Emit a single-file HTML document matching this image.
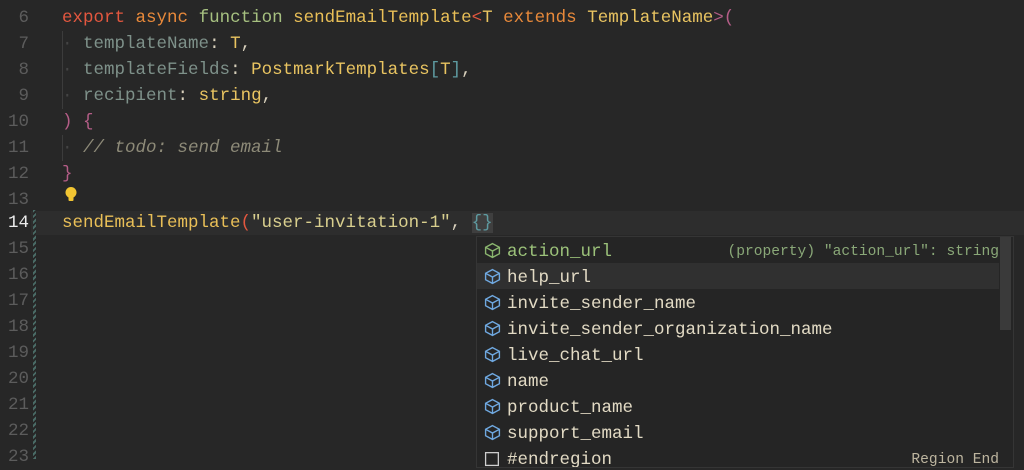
<!DOCTYPE html>
<html><head><meta charset="utf-8"><style>
body{margin:0;width:1024px;height:459px;background:#272727;overflow:hidden;font-family:"Liberation Mono",monospace;font-size:17.5px;position:relative}
.ln{position:absolute;left:0;width:29px;text-align:right;color:#5c5c5c;height:26px;line-height:26px}
.cl{position:absolute;left:62px;height:26px;line-height:26px;white-space:pre;color:#d8d0bc}
.g{position:absolute;left:62px;width:1px;background:#3c3c3c}
.k1{color:#e3573f}.k2{color:#e8893a}.k3{color:#a6c080}.fn{color:#e9bf57}.p{color:#7e918a}.ty{color:#e9c461}.br{color:#b45d87}.cm{color:#8d8a78;font-style:italic}.st{color:#d9cf8e}.bk{color:#5e9aa0}.dot{color:#444}
#pop{position:absolute;left:476px;top:236px;width:536px;height:230px;background:#252525;border:1px solid #353535;overflow:hidden}
.r{position:absolute;left:0;width:522px;height:26px;line-height:26px;white-space:pre;color:#e2dac4;padding-top:2px;box-sizing:border-box}
.r svg{position:absolute;left:7px;top:5px}
.r span.t{position:absolute;left:30px}
.d{position:absolute;right:0;font-size:14.6px}
</style></head><body>
<div style="position:absolute;left:31px;top:211px;width:993px;height:24px;background:#2d2d2d"></div>
<div style="position:absolute;left:33px;top:210px;width:3px;height:249px;background:repeating-linear-gradient(135deg,#4a6b66 0 2px,#272727 2px 4px)"></div>
<div class="g" style="top:31px;height:78px"></div>
<div class="g" style="top:135px;height:26px"></div>
<div class="ln" style="top:5px">6</div>
<div class="ln" style="top:31px">7</div>
<div class="ln" style="top:57px">8</div>
<div class="ln" style="top:83px">9</div>
<div class="ln" style="top:109px">10</div>
<div class="ln" style="top:135px">11</div>
<div class="ln" style="top:161px">12</div>
<div class="ln" style="top:187px">13</div>
<div class="ln" style="top:210px;color:#ececec">14</div>
<div class="ln" style="top:236px">15</div>
<div class="ln" style="top:262px">16</div>
<div class="ln" style="top:288px">17</div>
<div class="ln" style="top:314px">18</div>
<div class="ln" style="top:340px">19</div>
<div class="ln" style="top:366px">20</div>
<div class="ln" style="top:392px">21</div>
<div class="ln" style="top:418px">22</div>
<div class="ln" style="top:444px">23</div>
<div class="cl" style="top:5px"><span class="k1">export</span> <span class="k2">async</span> <span class="k3">function</span> <span class="fn">sendEmailTemplate</span><span class="k1">&lt;</span><span class="ty">T</span> <span class="k2">extends</span> <span class="ty">TemplateName</span><span class="br">&gt;(</span></div>
<div class="cl" style="top:31px"><span class="dot">·</span> <span class="p">templateName</span>: <span class="ty">T</span>,</div>
<div class="cl" style="top:57px"><span class="dot">·</span> <span class="p">templateFields</span>: <span class="ty">PostmarkTemplates</span><span class="bk">[</span><span class="ty">T</span><span class="bk">]</span>,</div>
<div class="cl" style="top:83px"><span class="dot">·</span> <span class="p">recipient</span>: <span class="ty">string</span>,</div>
<div class="cl" style="top:109px"><span class="br">)</span> <span class="br">{</span></div>
<div class="cl" style="top:135px"><span class="dot">·</span> <span class="cm">// todo: send email</span></div>
<div class="cl" style="top:161px"><span class="br">}</span></div>
<svg style="position:absolute;left:64px;top:186px" width="14" height="18" viewBox="0 0 14 18"><circle cx="7" cy="6.5" r="5.5" fill="#f2c532"/><rect x="4.5" y="10" width="5" height="5" rx="1" fill="#f2c532"/></svg>
<div class="cl" style="top:210px"><span class="fn">sendEmailTemplate</span><span class="k1">(</span><span class="st">"user-invitation-1"</span>, <span style="background:#3f3f3f" class="bk">{}</span></div>
<div id="pop">
<div class="r" style="top:0"><svg width="17" height="17" viewBox="0 0 16 16" fill="none" stroke="#8ab56e" stroke-width="1.3"><path d="M8 1.5 14.5 5v6L8 14.5 1.5 11V5z M1.5 5 8 8.5 14.5 5 M8 8.5v6"/></svg><span class="t" style="color:#9cc27a">action_url</span><span class="d" style="color:#8aa878">(property) "action_url": string</span></div>
<div class="r" style="top:26px;background:#303030"><svg width="17" height="17" viewBox="0 0 16 16" fill="none" stroke="#6fa8e0" stroke-width="1.3"><path d="M8 1.5 14.5 5v6L8 14.5 1.5 11V5z M1.5 5 8 8.5 14.5 5 M8 8.5v6"/></svg><span class="t">help_url</span></div>
<div class="r" style="top:52px"><svg width="17" height="17" viewBox="0 0 16 16" fill="none" stroke="#6fa8e0" stroke-width="1.3"><path d="M8 1.5 14.5 5v6L8 14.5 1.5 11V5z M1.5 5 8 8.5 14.5 5 M8 8.5v6"/></svg><span class="t">invite_sender_name</span></div>
<div class="r" style="top:78px"><svg width="17" height="17" viewBox="0 0 16 16" fill="none" stroke="#6fa8e0" stroke-width="1.3"><path d="M8 1.5 14.5 5v6L8 14.5 1.5 11V5z M1.5 5 8 8.5 14.5 5 M8 8.5v6"/></svg><span class="t">invite_sender_organization_name</span></div>
<div class="r" style="top:104px"><svg width="17" height="17" viewBox="0 0 16 16" fill="none" stroke="#6fa8e0" stroke-width="1.3"><path d="M8 1.5 14.5 5v6L8 14.5 1.5 11V5z M1.5 5 8 8.5 14.5 5 M8 8.5v6"/></svg><span class="t">live_chat_url</span></div>
<div class="r" style="top:130px"><svg width="17" height="17" viewBox="0 0 16 16" fill="none" stroke="#6fa8e0" stroke-width="1.3"><path d="M8 1.5 14.5 5v6L8 14.5 1.5 11V5z M1.5 5 8 8.5 14.5 5 M8 8.5v6"/></svg><span class="t">name</span></div>
<div class="r" style="top:156px"><svg width="17" height="17" viewBox="0 0 16 16" fill="none" stroke="#6fa8e0" stroke-width="1.3"><path d="M8 1.5 14.5 5v6L8 14.5 1.5 11V5z M1.5 5 8 8.5 14.5 5 M8 8.5v6"/></svg><span class="t">product_name</span></div>
<div class="r" style="top:182px"><svg width="17" height="17" viewBox="0 0 16 16" fill="none" stroke="#6fa8e0" stroke-width="1.3"><path d="M8 1.5 14.5 5v6L8 14.5 1.5 11V5z M1.5 5 8 8.5 14.5 5 M8 8.5v6"/></svg><span class="t">support_email</span></div>
<div class="r" style="top:208px"><svg width="17" height="17" viewBox="0 0 16 16" fill="none" stroke="#cfcfcf" stroke-width="1.2"><rect x="1.5" y="2.5" width="12" height="12"/></svg><span class="t">#endregion</span><span class="d" style="color:#bdb59f">Region End</span></div>
<div style="position:absolute;left:523px;top:0;width:11px;height:93px;background:#3a3a3a"></div>
</div>
</body></html>
